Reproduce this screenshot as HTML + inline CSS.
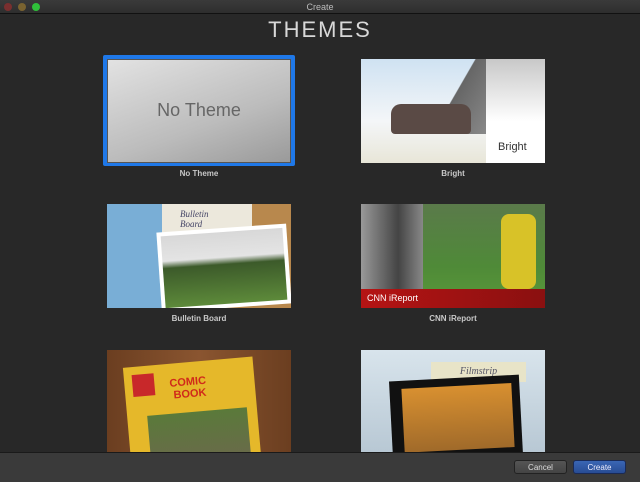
<!DOCTYPE html>
<html><head><meta charset="utf-8"><style>
*{margin:0;padding:0;box-sizing:border-box}
body{width:640px;height:482px;background:#282828;position:relative;overflow:hidden;font-family:"Liberation Sans",sans-serif}
.tb{position:absolute;left:0;top:0;width:640px;height:14px;background:linear-gradient(#3a3a3a,#2e2e2e);border-bottom:1px solid #111;color:#bbb;font-size:9px;text-align:center;line-height:14px}
.dot{position:absolute;top:3px;width:8px;height:8px;border-radius:50%}
h1{position:absolute;top:17px;left:0;width:640px;text-align:center;font-weight:normal;font-size:22px;letter-spacing:2px;color:#d8d8d8}
.t{position:absolute;width:184px;height:104px;overflow:hidden}
.l{position:absolute;width:184px;text-align:center;font-size:8px;font-weight:bold;color:#c8c8c8}
.bot{position:absolute;left:0;top:452px;width:640px;height:30px;background:#3a3a3a;border-top:1px solid #1a1a1a}
.btn{position:absolute;top:460px;height:14px;border-radius:3px;font-size:8px;line-height:13px;text-align:center;color:#ddd}
</style></head><body>
<div class="tb">Create
<div class="dot" style="left:4px;background:#7a2f2f"></div>
<div class="dot" style="left:18px;background:#7a6330"></div>
<div class="dot" style="left:32px;background:#2fbf3a"></div></div>
<h1>THEMES</h1>

<div style="position:absolute;left:103px;top:55px;width:192px;height:111px;background:#1f78e8;border-radius:2px"></div>
<div class="t" style="left:107px;top:59px;height:104px;background:linear-gradient(160deg,#e2e2e2,#bcbcbc 60%,#9a9a9a);border:1px solid #555">
<div style="position:absolute;top:40px;width:100%;text-align:center;font-size:18px;color:#666">No Theme</div></div>
<div class="l" style="left:107px;top:169px">No Theme</div>

<div class="t" style="left:361px;top:59px;background:linear-gradient(180deg,#cfe2f2,#f4f6f8 60%,#e8e6d8)">
<div style="position:absolute;left:80px;top:0;width:70px;height:75px;background:linear-gradient(120deg,transparent 30%,#666 31%,#999 100%)"></div>
<div style="position:absolute;left:30px;top:45px;width:80px;height:30px;background:#5a4a45;border-radius:10px 10px 4px 4px"></div>
<div style="position:absolute;left:125px;top:0;width:59px;height:104px;background:linear-gradient(#c8c8c8,#fff 60%)"></div>
<div style="position:absolute;left:137px;top:82px;font-size:11px;color:#333">Bright</div></div>
<div class="l" style="left:361px;top:169px">Bright</div>

<div class="t" style="left:107px;top:204px;background:#b8884d">
<div style="position:absolute;left:0;top:0;width:60px;height:104px;background:#79aed6"></div>
<div style="position:absolute;left:55px;top:0;width:90px;height:60px;background:#ece8dc;font:italic 9px 'Liberation Serif',serif;color:#446;padding:5px 18px">Bulletin<br>Board</div>
<div style="position:absolute;left:52px;top:24px;width:130px;height:80px;background:#fff;transform:rotate(-4deg);padding:4px">
<div style="width:100%;height:100%;background:linear-gradient(#d8d8d8 0,#e4e4e4 35%,#3c5a2a 45%,#5d8a3a 100%)"></div></div></div>
<div class="l" style="left:107px;top:314px">Bulletin Board</div>

<div class="t" style="left:361px;top:204px;background:linear-gradient(#5a7a4a,#4f8a38 60%,#5a9a3a)">
<div style="position:absolute;left:0;top:0;width:62px;height:85px;background:linear-gradient(90deg,#999,#444 60%,#888)"></div>
<div style="position:absolute;left:140px;top:10px;width:35px;height:75px;background:#d8c228;border-radius:8px"></div>
<div style="position:absolute;left:0;top:85px;width:184px;height:19px;background:linear-gradient(90deg,#b51414,#8a1010);color:#fff;font-size:9px;line-height:19px;padding-left:6px">CNN iReport</div></div>
<div class="l" style="left:361px;top:314px">CNN iReport</div>

<div class="t" style="left:107px;top:350px;height:102px;background:linear-gradient(90deg,#6b3e20,#8a5530,#6b3e20)">
<div style="position:absolute;left:20px;top:12px;width:130px;height:100px;background:#e5b82a;transform:rotate(-5deg)">
<div style="position:absolute;left:8px;top:8px;width:22px;height:22px;background:#c8282a"></div>
<div style="position:absolute;left:45px;top:14px;font:bold 11px 'Liberation Sans';color:#d02a1a">COMIC<br>&nbsp;BOOK</div>
<div style="position:absolute;left:20px;top:50px;width:100px;height:50px;background:linear-gradient(#5a7a3a,#6a6a4a)"></div></div></div>

<div class="t" style="left:361px;top:350px;height:102px;background:linear-gradient(#d8e4ec,#b8c8d4)">
<div style="position:absolute;left:70px;top:12px;width:95px;height:20px;background:#e8e4c8;font:italic 10px 'Liberation Serif';color:#556;text-align:center;line-height:20px">Filmstrip</div>
<div style="position:absolute;left:30px;top:28px;width:130px;height:80px;background:#111;transform:rotate(-3deg)">
<div style="position:absolute;left:12px;top:8px;width:110px;height:64px;background:linear-gradient(#d89030,#a06a2a)"></div></div></div>

<div class="bot"></div>
<div class="btn" style="left:514px;width:53px;background:linear-gradient(#555,#444);border:1px solid #222">Cancel</div>
<div class="btn" style="left:573px;width:53px;background:linear-gradient(#3a66b4,#284c94);border:1px solid #1a2a55;color:#eef">Create</div>
</body></html>
